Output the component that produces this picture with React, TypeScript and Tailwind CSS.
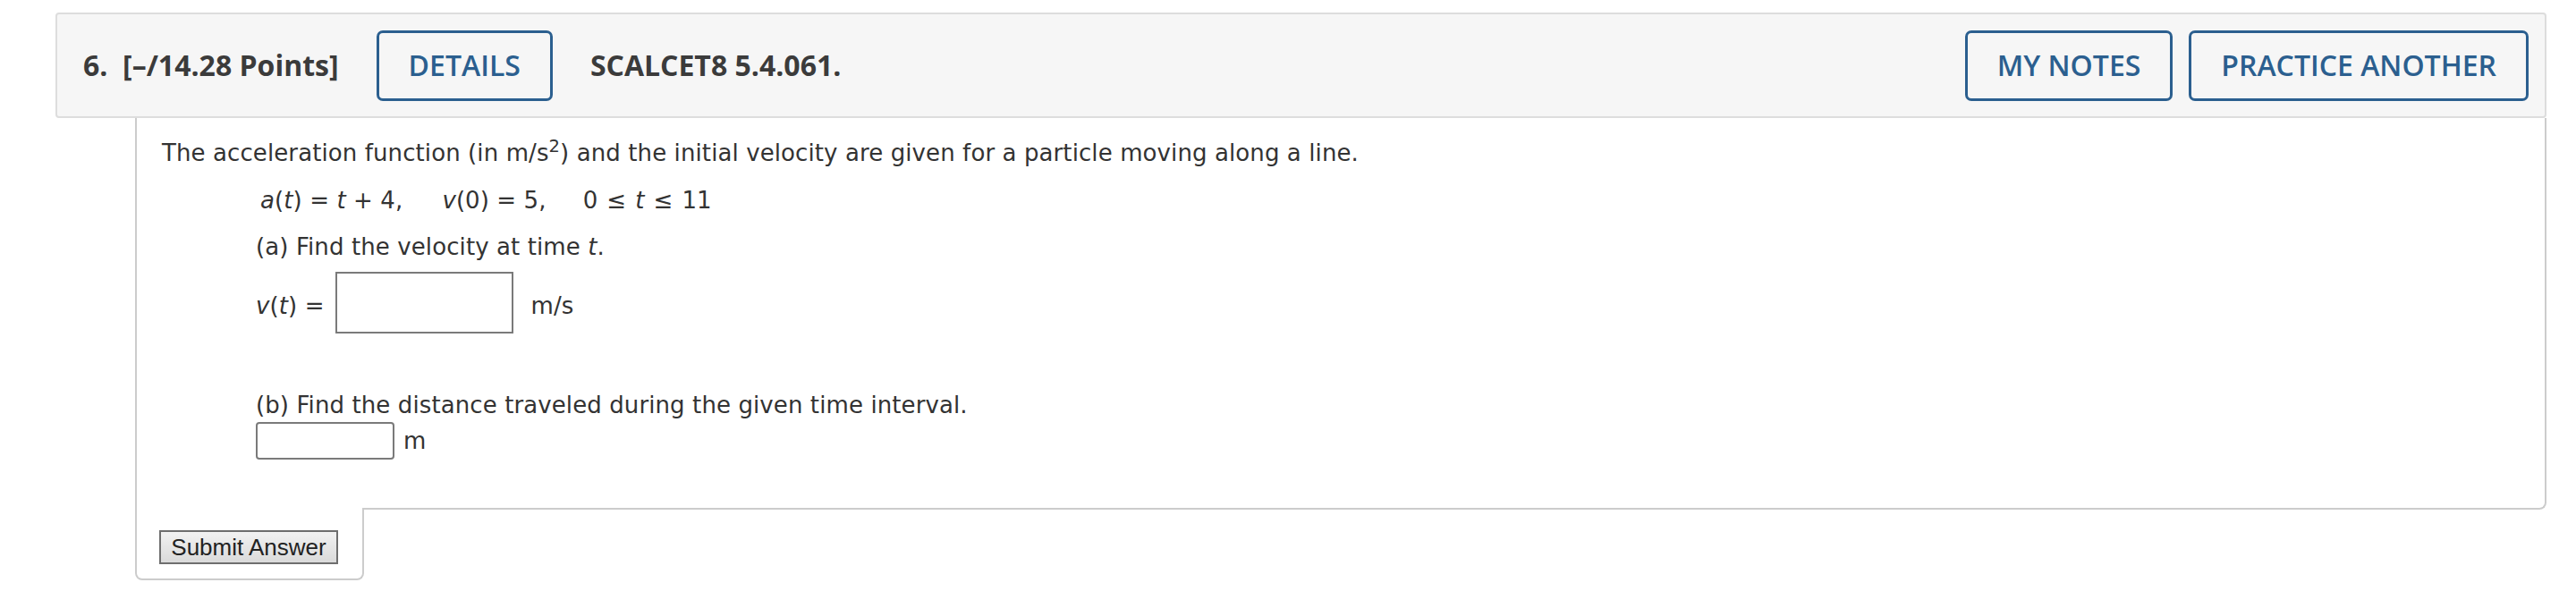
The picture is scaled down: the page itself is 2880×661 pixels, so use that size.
import React from "react";

const blueBtn =
  "h-[79px] px-[33px] flex items-center border-[3px] border-[#2b5f8f] rounded-[7px] text-[#2b5f8f] font-semibold text-[32px] leading-[44px] bg-transparent";

export default function App() {
  return (
    <div className="w-[2880px] h-[661px] bg-white pt-[14px] pl-[62px] pr-[33px]">
      {/* Header */}
      <div
        className="h-[118px] flex items-center border-2 border-[#dddddd] rounded-[4px] bg-[#f6f6f6] pl-[29px] pr-[18px] text-[#3b3b3b]"
        style={{ fontFamily: '"Open Sans", "Noto Sans", sans-serif' }}
      >
        <span className="font-bold text-[32px] leading-[44px] whitespace-pre">
          {"6.  [–/14.28 Points]"}
        </span>
        <div className={blueBtn + " ml-[42px]"}>DETAILS</div>
        <span className="ml-[42px] font-bold text-[32px] leading-[44px]">
          SCALCET8 5.4.061.
        </span>
        <div className="ml-auto flex items-center gap-[18px]">
          <div className={blueBtn}>MY NOTES</div>
          <div className={blueBtn}>PRACTICE ANOTHER</div>
        </div>
      </div>

      {/* Body */}
      <div
        className="ml-[89px] border-x-2 border-b-2 border-[#cccccc] rounded-br-[8px] pl-[28px] pt-[21px] pb-[54px] text-[#333333] text-[26px] leading-[36px] tracking-[0.1px]"
        style={{ fontFamily: '"DejaVu Sans", Verdana, sans-serif' }}
      >
        <div>
          The acceleration function (in m/s<sup>2</sup>) and the initial velocity are given for a
          particle moving along a line.
        </div>
        <div className="mt-[17px] pl-[110px] flex">
          <span>
            <i>a</i>(<i>t</i>) = <i>t</i> + 4,
          </span>
          <span className="ml-[44px]">
            <i>v</i>(0) = 5,
          </span>
          <span className="ml-[41px] flex">
            <span>0</span>
            <span className="mx-[10px]">≤</span>
            <i>t</i>
            <span className="mx-[10px]">≤</span>
            <span>11</span>
          </span>
        </div>
        <div className="mt-[16px] pl-[105px]">
          (a) Find the velocity at time <i>t</i>.
        </div>
        <div className="mt-[10px] pl-[105px] flex items-start">
          <span className="mt-[20px]">
            <i>v</i>(<i>t</i>) =
          </span>
          <div className="ml-[12px] w-[199px] h-[69px] border-2 border-[#7a7a7a] bg-white" />
          <span className="mt-[20px] ml-[20px]">m/s</span>
        </div>
        <div className="mt-[62px] pl-[105px]">
          (b) Find the distance traveled during the given time interval.
        </div>
        <div className="mt-px pl-[105px] flex items-start">
          <div className="w-[155px] h-[42px] border-2 border-[#7a7a7a] rounded-[4px] bg-white" />
          <span className="ml-[10px] mt-[3px]">m</span>
        </div>
      </div>

      {/* Submit tab */}
      <div className="relative -mt-[2px] ml-[89px] w-[256px] border-x-2 border-b-2 border-[#cccccc] rounded-b-[8px] bg-white pl-[25px] pt-[25px] pb-[16px]">
        <div
          className="w-[200px] h-[38px] flex items-center justify-center border-2 border-[#6e6e6e] bg-gradient-to-b from-[#f2f2f2] to-[#dadada] text-[26px] leading-[30px] text-[#222222]"
          style={{ fontFamily: '"Liberation Sans", Arial, sans-serif' }}
        >
          Submit Answer
        </div>
      </div>
    </div>
  );
}
